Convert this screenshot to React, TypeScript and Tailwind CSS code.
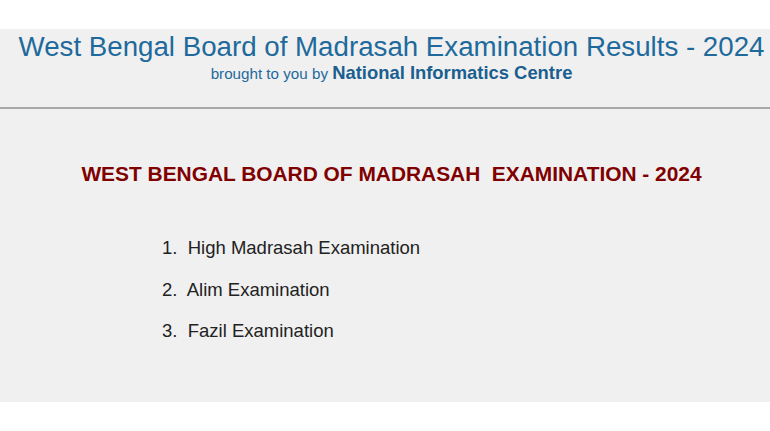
export default function App() {
  const exams = ["High Madrasah Examination", "Alim Examination", "Fazil Examination"];
  return (
    <div className="w-[770px] h-[431px] bg-white font-['Liberation_Sans',Arial,sans-serif]">
      <div className="h-[29px]" />
      <div className="bg-[#f0f0f0] h-[373px]">
        <div className="h-[80px] text-center border-b-2 border-[#a8a8a8] pt-[1px] pl-[13px]">
          <h1 className="text-[27.7px] leading-[33px] text-[#1e6a9c] whitespace-nowrap">
            West Bengal Board of Madrasah Examination Results - 2024
          </h1>
          <p className="text-[15.2px] leading-[20px] text-[#1e6a9c]">
            brought to you by <b className="text-[18.4px] text-[#1a5f8f]">National Informatics Centre</b>
          </p>
        </div>
        <div className="pl-[13px]">
          <h2 className="mt-[53px] text-center text-[20.9px] leading-[24px] font-bold text-[#800000] whitespace-pre">
            {"WEST BENGAL BOARD OF MADRASAH  EXAMINATION - 2024"}
          </h2>
          <ol className="mt-[52px] pl-[149px] text-[18.5px] leading-[20px] text-[#222]">
            {exams.map((e, i) => (
              <li key={e} className="mb-[21.5px]">
                {i + 1}.&nbsp; {e}
              </li>
            ))}
          </ol>
        </div>
      </div>
    </div>
  );
}
